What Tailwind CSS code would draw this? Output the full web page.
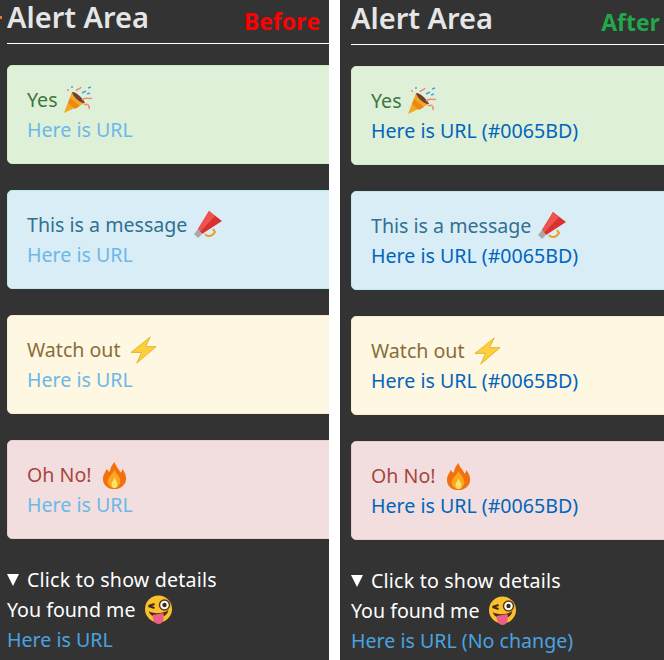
<!DOCTYPE html>
<html lang="en">
<head>
    <meta charset="UTF-8">
    <title>Alert Area</title>
    <script src="https://cdn.jsdelivr.net/npm/@tailwindcss/browser@4"></script>
</head>
<body class="bg-white font-['Noto_Sans',sans-serif] text-[19.6px] leading-[30px]">
    <svg class="hidden">
        <symbol id="party" viewBox="0 0 30 30">
            <path d="M1 28 L9 7 L22 18 Z" fill="#f5a623"/>
            <path d="M7 13 L17 21 L12 24 L5 18 Z" fill="#e98a15"/>
            <path d="M9 7 C12 6 20 13 22 18 C18 19 10 12 9 7 Z" fill="#6d4034"/>
            <path d="M13 6 C14 3 17 5 18 2 M19 15 C23 11 26 15 29 13 M21 20 C24 18 27 20 26 24" fill="none" stroke="#f08a70" stroke-width="1.5"/>
            <path d="M19 8 L23 6 M25 3 L28 2 M24 9 L27 8" fill="none" stroke="#4aa3e0" stroke-width="1.5"/>
            <circle cx="9" cy="2" r="1" fill="#4aa3e0"/><circle cx="5" cy="5" r="1" fill="#f08a70"/>
        </symbol>
        <symbol id="horn" viewBox="0 0 28 28">
            <path d="M15 0 L28 10 L8 23 L4 18 Z" fill="#d93030"/>
            <path d="M15 0 L21 5 L6 21 L4 18 Z" fill="#ef5350"/>
            <path d="M4 18 L8 23 L4 27 L0 23 Z" fill="#a9a9a9"/>
            <path d="M11 23 C13 26 18 26 21 21 L19 18" fill="none" stroke="#e8a11c" stroke-width="2"/>
        </symbol>
        <symbol id="bolt" viewBox="0 0 30 30">
            <path d="M21 1 L1 17 L12 17 L7 28 L27 11 L16 11 Z" fill="#fbd03c" stroke="#e9b22c" stroke-width="1"/>
        </symbol>
        <symbol id="fire" viewBox="0 0 30 30">
            <path d="M15 1 C17 7 20 8 21 12 C23 11 23 9 23 8 C26 12 27 15 27 18 C27 25 21 29 15 29 C8 29 3 25 3 18 C3 14 6 11 7 8 C8 10 9 11 10 11 C11 7 12 4 15 1 Z" fill="#f4700f"/>
            <path d="M15 9 C16 13 21 15 21 21 C21 25 18 28 15 28 C11 28 8 25 8 21 C8 17 13 14 15 9 Z" fill="#fba81f"/>
            <path d="M15 17 C16 20 18 21 18 24 C18 26 17 28 15 28 C13 28 12 26 12 24 C12 21 14 20 15 17 Z" fill="#fde36a"/>
        </symbol>
        <symbol id="wink" viewBox="0 0 30 30">
            <circle cx="15" cy="14" r="13.5" fill="#fbc02d"/>
            <path d="M5 11 L11 9 M5 11 L11 13" fill="none" stroke="#3e2a14" stroke-width="2"/>
            <circle cx="21" cy="10" r="5" fill="#fff" stroke="#5a3a14" stroke-width="1.5"/>
            <circle cx="21" cy="10" r="2.2" fill="#3e2a14"/>
            <path d="M5 16 C9 19 20 19 25 15 C24 19 22 20 21 21 L9 21 C7 20 6 18 5 16 Z" fill="#4a2c12"/>
            <path d="M9 20 L20 18 C21 23 20 29 15 29 C11 29 9 25 9 20 Z" fill="#ec5f86"/>
        </symbol>
    </svg>

    <div class="grid grid-cols-[329px_324px] gap-x-[11px] h-[660px]">
        <!-- before -->
        <section class="relative bg-[#333333] overflow-x-clip pl-[7px] h-[660px]">
            <span class="absolute left-[-3px] top-[16px] w-[5px] h-[3px] bg-[#e8772e]"></span>
            <header class="flex justify-between h-[44px] border-b border-white pr-[9px]">
                <h1 class="text-[29px] leading-[34px] font-semibold text-[#e6e6e6]">Alert Area</h1>
                <span class="text-[23px] leading-[42px] font-bold text-[#ff0000] font-['Open_Sans',sans-serif]">Before</span>
            </header>
            <div class="flex flex-col gap-[26px] w-[340px] mt-[21px]">
                <div class="h-[99px] rounded-[5px] border border-[#d6e9c6] bg-[#dff0d8] px-[19px] py-[19px] text-[#3c763d]">
                    <p class="flex items-center gap-[5px]">Yes <svg class="w-[30px] h-[30px]"><use href="#party"/></svg></p>
                    <a class="block text-[#6cb8e8]">Here is URL</a>
                </div>
                <div class="h-[99px] rounded-[5px] border border-[#bce8f1] bg-[#d9edf7] px-[19px] py-[19px] text-[#31708f]">
                    <p class="flex items-center gap-[7px]">This is a message <svg class="w-[28px] h-[28px]"><use href="#horn"/></svg></p>
                    <a class="block text-[#6cb8e8]">Here is URL</a>
                </div>
                <div class="h-[99px] rounded-[5px] border border-[#faebcc] bg-[#fef7e2] px-[19px] py-[19px] text-[#8a6d3b]">
                    <p class="flex items-center gap-[9px]">Watch out <svg class="w-[29px] h-[29px]"><use href="#bolt"/></svg></p>
                    <a class="block text-[#6cb8e8]">Here is URL</a>
                </div>
                <div class="h-[99px] rounded-[5px] border border-[#ebccd1] bg-[#f2dede] px-[19px] py-[19px] text-[#a94442]">
                    <p class="flex items-center gap-[8px]">Oh No! <svg class="w-[29px] h-[29px]"><use href="#fire"/></svg></p>
                    <a class="block text-[#6cb8e8]">Here is URL</a>
                </div>
            </div>
            <div class="mt-[26px] text-white">
                <p class="flex items-center gap-[8px] tracking-[0.2px]"><span class="w-0 h-0 border-x-[6.5px] border-x-transparent border-t-[12px] border-t-white"></span>Click to show details</p>
                <p class="flex items-center gap-[7px]">You found me <svg class="w-[31px] h-[30px]"><use href="#wink"/></svg></p>
                <a class="block text-[#4aa3e0]">Here is URL</a>
            </div>
        </section>

        <!-- after -->
        <section class="bg-[#333333] overflow-x-clip pl-[11px] pt-[1px] h-[660px]">
            <header class="flex justify-between h-[44px] border-b border-white pr-[4px]">
                <h1 class="text-[29px] leading-[34px] font-semibold text-[#e6e6e6]">Alert Area</h1>
                <span class="text-[23px] leading-[42px] font-bold text-[#22a84a] font-['Open_Sans',sans-serif]">After</span>
            </header>
            <div class="flex flex-col gap-[26px] w-[340px] mt-[21px]">
                <div class="h-[99px] rounded-[5px] border border-[#d6e9c6] bg-[#dff0d8] px-[19px] py-[19px] text-[#3c763d]">
                    <p class="flex items-center gap-[5px]">Yes <svg class="w-[30px] h-[30px]"><use href="#party"/></svg></p>
                    <a class="block text-[#0065bd]">Here is URL (#0065BD)</a>
                </div>
                <div class="h-[99px] rounded-[5px] border border-[#bce8f1] bg-[#d9edf7] px-[19px] py-[19px] text-[#31708f]">
                    <p class="flex items-center gap-[7px]">This is a message <svg class="w-[28px] h-[28px]"><use href="#horn"/></svg></p>
                    <a class="block text-[#0065bd]">Here is URL (#0065BD)</a>
                </div>
                <div class="h-[99px] rounded-[5px] border border-[#faebcc] bg-[#fef7e2] px-[19px] py-[19px] text-[#8a6d3b]">
                    <p class="flex items-center gap-[9px]">Watch out <svg class="w-[29px] h-[29px]"><use href="#bolt"/></svg></p>
                    <a class="block text-[#0065bd]">Here is URL (#0065BD)</a>
                </div>
                <div class="h-[99px] rounded-[5px] border border-[#ebccd1] bg-[#f2dede] px-[19px] py-[19px] text-[#a94442]">
                    <p class="flex items-center gap-[8px]">Oh No! <svg class="w-[29px] h-[29px]"><use href="#fire"/></svg></p>
                    <a class="block text-[#0065bd]">Here is URL (#0065BD)</a>
                </div>
            </div>
            <div class="mt-[26px] text-white">
                <p class="flex items-center gap-[8px] tracking-[0.2px]"><span class="w-0 h-0 border-x-[6.5px] border-x-transparent border-t-[12px] border-t-white"></span>Click to show details</p>
                <p class="flex items-center gap-[7px]">You found me <svg class="w-[31px] h-[30px]"><use href="#wink"/></svg></p>
                <a class="block text-[#4aa3e0]">Here is URL (No change)</a>
            </div>
        </section>
    </div>
</body>
</html>
